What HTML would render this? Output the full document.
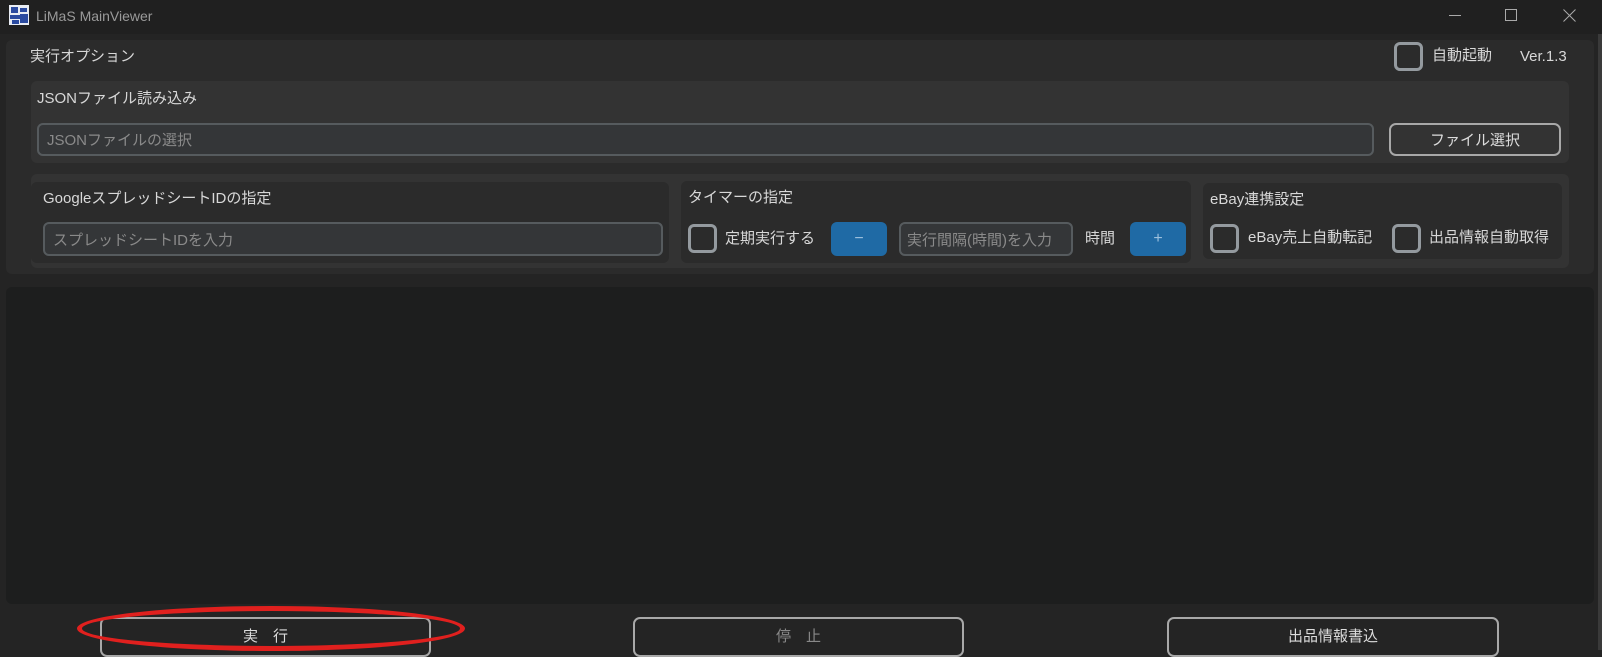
<!DOCTYPE html>
<html><head><meta charset="utf-8"><style>
*{box-sizing:border-box;margin:0;padding:0}
body{width:1602px;height:650px;background:#242424;position:relative;overflow:hidden;font-family:"Liberation Sans","Noto Sans CJK JP",sans-serif;color:#d8d8d8;font-size:15px}
.a{position:absolute}
.t{position:absolute;white-space:nowrap;line-height:20px}
.cb{position:absolute;width:29px;height:29px;border:3px solid #949a9f;border-radius:6px}
.in{position:absolute;border:2px solid #565b5e;border-radius:6px;background:#343638;color:#8a8a8a;padding-left:8px;display:flex;align-items:center;font-size:15px}
.btn{position:absolute;border:2px solid #a8a8a8;border-radius:7px;display:flex;align-items:center;justify-content:center;font-size:15px;color:#dcdcdc}
.blue{position:absolute;background:#1f6aa5;border-radius:6px;color:#9cc0dd;display:flex;align-items:center;justify-content:center;font-size:16px}
</style></head><body>
<div class="a" style="left:0;top:0;width:1602px;height:34px;background:#202020"></div>
<svg class="a" style="left:9px;top:5px" width="20" height="20" viewBox="0 0 20 20"><rect width="20" height="20" fill="#e8ecf4"/><rect x="2" y="2" width="7" height="6" fill="#2a4aa0"/><rect x="11" y="3" width="7" height="4" fill="#2a4aa0"/><rect x="1" y="10" width="10" height="4" fill="#2a4aa0"/><rect x="11" y="9" width="8" height="9" fill="#2a4aa0"/><rect x="3" y="15" width="7" height="4" fill="#2a4aa0"/></svg>
<div class="t" style="left:36px;top:6px;color:#9a9a9a;font-size:14px">LiMaS MainViewer</div>
<div class="a" style="left:1449px;top:15px;width:12px;height:1px;background:#aaa"></div>
<div class="a" style="left:1505px;top:9px;width:12px;height:12px;border:1px solid #aaa"></div>
<svg class="a" style="left:1563px;top:9px" width="13" height="13" viewBox="0 0 13 13"><path d="M0.5 0.5L12.5 12.5M12.5 0.5L0.5 12.5" stroke="#aaa" stroke-width="1"/></svg>
<div class="a" style="left:1598px;top:34px;width:4px;height:616px;background:#3a3a3a"></div>

<div class="a" style="left:6px;top:40px;width:1588px;height:234px;background:#2b2b2b;border-radius:6px"></div>
<div class="t" style="left:30px;top:47px">実行オプション</div>
<div class="cb" style="left:1394px;top:42px"></div>
<div class="t" style="left:1432px;top:46px">自動起動</div>
<div class="t" style="left:1520px;top:47px">Ver.1.3</div>

<div class="a" style="left:31px;top:81px;width:1538px;height:82px;background:#333;border-radius:6px"></div>
<div class="t" style="left:37px;top:89px">JSONファイル読み込み</div>
<div class="in" style="left:37px;top:123px;width:1337px;height:33px">JSONファイルの選択</div>
<div class="btn" style="left:1389px;top:123px;width:172px;height:33px">ファイル選択</div>

<div class="a" style="left:31px;top:174px;width:1538px;height:94px;background:#333;border-radius:6px"></div>
<div class="a" style="left:31px;top:182px;width:638px;height:81px;background:#2b2b2b;border-radius:6px"></div>
<div class="t" style="left:43px;top:189px">GoogleスプレッドシートIDの指定</div>
<div class="in" style="left:43px;top:222px;width:620px;height:34px">スプレッドシートIDを入力</div>

<div class="a" style="left:681px;top:181px;width:510px;height:82px;background:#2b2b2b;border-radius:6px"></div>
<div class="t" style="left:688px;top:188px">タイマーの指定</div>
<div class="cb" style="left:688px;top:224px"></div>
<div class="t" style="left:725px;top:229px">定期実行する</div>
<div class="blue" style="left:831px;top:222px;width:56px;height:34px">−</div>
<div class="in" style="left:899px;top:222px;width:174px;height:34px;padding-left:6px;white-space:nowrap;overflow:hidden">実行間隔(時間)を入力</div>
<div class="t" style="left:1085px;top:229px">時間</div>
<div class="blue" style="left:1130px;top:222px;width:56px;height:34px">+</div>

<div class="a" style="left:1203px;top:183px;width:359px;height:76px;background:#2b2b2b;border-radius:6px"></div>
<div class="t" style="left:1210px;top:190px">eBay連携設定</div>
<div class="cb" style="left:1210px;top:224px"></div>
<div class="t" style="left:1248px;top:228px">eBay売上自動転記</div>
<div class="cb" style="left:1392px;top:224px"></div>
<div class="t" style="left:1429px;top:228px">出品情報自動取得</div>

<div class="a" style="left:6px;top:287px;width:1588px;height:317px;background:#1d1e1e;border-radius:6px"></div>

<div class="btn" style="left:100px;top:617px;width:331px;height:40px;align-items:flex-start;padding-top:6px">実　行</div>
<div class="btn" style="left:633px;top:617px;width:331px;height:40px;align-items:flex-start;padding-top:6px;color:#888">停　止</div>
<div class="btn" style="left:1167px;top:617px;width:332px;height:40px;align-items:flex-start;padding-top:6px">出品情報書込</div>
<div class="a" style="left:77px;top:606px;width:388px;height:45px;border:5px solid #e0201e;border-radius:50%/50%"></div>
</body></html>
